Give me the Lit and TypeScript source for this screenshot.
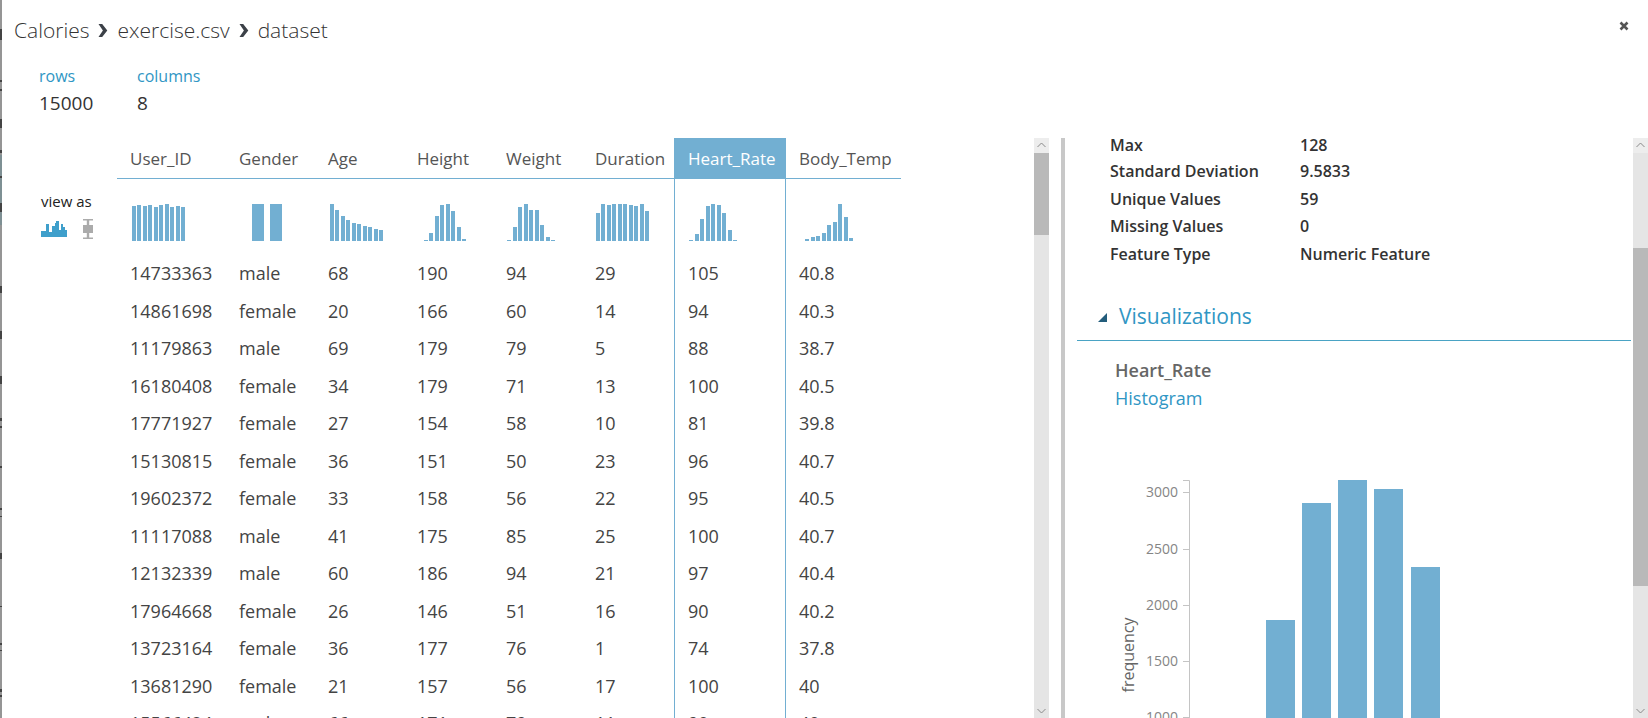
import { LitElement, html, svg, css } from "lit";
import { customElement, property, state } from "lit/decorators.js";
import { classMap } from "lit/directives/class-map.js";

interface Spark {
  start: number;
  phase: 0 | 1;
  bars: number[];
  barWidth?: number;
  step?: number;
}

interface Column {
  name: string;
  size: string;
  spark: Spark;
}

const COLUMNS: Column[] = [
  { name: "User_ID", size: "w-id", spark: { start: 2, phase: 0, bars: [35, 36, 35, 36, 34, 36, 37, 34, 35, 34] } },
  { name: "Gender", size: "w-std", spark: { start: 13, phase: 0, bars: [37, 37], barWidth: 12, step: 18 } },
  { name: "Age", size: "w-std", spark: { start: 2, phase: 0, bars: [37, 31, 25, 21, 18, 17, 15, 14, 12, 11] } },
  { name: "Height", size: "w-std", spark: { start: 7, phase: 0, bars: [1, 8, 25, 36, 37, 30, 14, 2] } },
  { name: "Weight", size: "w-std", spark: { start: 1, phase: 1, bars: [1, 14, 34, 37, 31, 31, 16, 4, 1] } },
  { name: "Duration", size: "w-duration", spark: { start: 1, phase: 0, bars: [28, 37, 36, 37, 37, 37, 36, 35, 37, 30] } },
  { name: "Heart_Rate", size: "w-heart", spark: { start: 1, phase: 1, bars: [1, 7, 22, 35, 37, 36, 28, 11, 1] } },
  { name: "Body_Temp", size: "w-temp", spark: { start: 6, phase: 1, bars: [2, 4, 5, 8, 16, 19, 37, 24, 3] } },
];

const ROWS: string[][] = [
  ["14733363", "male", "68", "190", "94", "29", "105", "40.8"],
  ["14861698", "female", "20", "166", "60", "14", "94", "40.3"],
  ["11179863", "male", "69", "179", "79", "5", "88", "38.7"],
  ["16180408", "female", "34", "179", "71", "13", "100", "40.5"],
  ["17771927", "female", "27", "154", "58", "10", "81", "39.8"],
  ["15130815", "female", "36", "151", "50", "23", "96", "40.7"],
  ["19602372", "female", "33", "158", "56", "22", "95", "40.5"],
  ["11117088", "male", "41", "175", "85", "25", "100", "40.7"],
  ["12132339", "male", "60", "186", "94", "21", "97", "40.4"],
  ["17964668", "female", "26", "146", "51", "16", "90", "40.2"],
  ["13723164", "female", "36", "177", "76", "1", "74", "37.8"],
  ["13681290", "female", "21", "157", "56", "17", "100", "40"],
  ["15566424", "male", "66", "171", "79", "11", "90", "40"],
];

const STATS: [string, string][] = [
  ["Max", "128"],
  ["Standard Deviation", "9.5833"],
  ["Unique Values", "59"],
  ["Missing Values", "0"],
  ["Feature Type", "Numeric Feature"],
];

@customElement("spark-bars")
export class SparkBars extends LitElement {
  @property({ attribute: false }) spark!: Spark;

  static styles = css`
    :host { display: block; }
    .plot { display: block; fill: #72afd2; }
  `;

  render() {
    const { start, phase, bars, barWidth = 4, step } = this.spark;
    return html`<svg class="plot" width="64" height="37" shape-rendering="crispEdges" aria-hidden="true">
      ${bars.map((h, i) => {
        const x = start + (step ? i * step : Math.floor((i * 11 + phase) / 2));
        return svg`<rect x=${x} y=${37 - h} width=${barWidth} height=${h}></rect>`;
      })}
    </svg>`;
  }
}

@customElement("scroll-rail")
export class ScrollRail extends LitElement {
  @property({ type: Number }) before = 0;
  @property({ type: Number }) thumb = 80;

  static styles = css`
    :host { display: flex; flex-direction: column; width: 15px; background: #e5e5e5; }
    .cap { display: block; flex: none; width: 15px; height: 15px; fill: none; stroke: #8a8a8a; }
    .up { background: #ededed; }
    .thumb { background: #b9b9b9; flex: none; }
    .space { flex: 1; }
  `;

  render() {
    return html`
      <svg class="cap up" viewBox="0 0 15 15"><path d="M3.5 9 L7.5 5 L11.5 9"></path></svg>
      <div style="height:${this.before}px"></div>
      <div class="thumb" style="height:${this.thumb}px"></div>
      <div class="space"></div>
      <svg class="cap" viewBox="0 0 15 15"><path d="M3.5 6 L7.5 10 L11.5 6"></path></svg>
    `;
  }
}

@customElement("histogram-chart")
export class HistogramChart extends LitElement {
  static styles = css`
    :host { display: block; }
    .chart { display: block; font-family: "Open Sans", "Noto Sans", sans-serif; font-weight: 400; }
    .bar { fill: #72afd2; }
    .axis { fill: none; stroke: #c4c4c4; stroke-width: 1; }
    .tick { fill: #858585; font-size: 14px; text-anchor: end; }
    .name { fill: #666; font-size: 16px; text-anchor: middle; }
  `;

  private readonly counts = [12, 560, 1867, 2905, 3110, 3030, 2337, 900, 60];
  private readonly base = 350;
  private readonly span = 350;
  private readonly max = 3110;

  private y(value: number) {
    return Math.round(this.base - (value / this.max) * this.span);
  }

  render() {
    const ticks = [3000, 2500, 2000, 1500, 1000, 500, 0];
    return html`<svg class="chart" width="460" height="400" role="img" aria-label="Histogram of Heart_Rate">
      <text class="name" transform="translate(34 180) rotate(-90)">frequency</text>
      <path class="axis" d="M83 5.5 H89.5 V355"></path>
      ${ticks.map((t) => {
        const y = this.y(t) + 5;
        return svg`<path class="axis" d="M83 ${y + 0.5} H90"></path>
          <text class="tick" x="78" y=${y + 5}>${t}</text>`;
      })}
      ${this.counts.map((c, i) => {
        const y = this.y(c) + 5;
        return svg`<rect class="bar" x=${Math.round(93 + i * 36.25)} y=${y} width="29" height=${355 - y}></rect>`;
      })}
    </svg>`;
  }
}

@customElement("app-root")
export class AppRoot extends LitElement {
  @state() private selected = "Heart_Rate";

  static styles = css`
    :host {
      display: flex;
      height: 100vh;
      overflow: hidden;
      background: #fff;
      color: #333;
      font-family: "Open Sans", "Noto Sans", sans-serif;
      font-size: 18px;
      font-weight: 400;
    }
    * { box-sizing: border-box; }
    button { border: 0; padding: 0; margin: 0; background: none; font: inherit; color: inherit; cursor: pointer; }
    .edge { flex: none; width: 2px; background: #959595; }
    .edge svg { display: block; }
    .main { flex: 1; min-width: 0; display: flex; flex-direction: column; }
    .top { flex: none; display: flex; justify-content: space-between; padding: 12px 19px 0 12px; }
    .crumbs { display: flex; align-items: center; height: 36px; gap: 9px; font-size: 21px; line-height: 36px; font-weight: 300; }
    .crumbs a { color: #333; text-decoration: none; }
    .chev { display: block; }
    .close { width: 10px; height: 10px; margin-top: 9px; }
    .close svg { display: block; }
    .counts { flex: none; display: flex; margin: 14px 0 0 37px; height: 76px; }
    .counts div { width: 98px; }
    .counts dt { color: #3096c4; font-size: 16px; line-height: 28px; }
    .counts dd { margin: 0; font-size: 19px; line-height: 26px; }
    .body { flex: 1; min-height: 0; display: flex; }
    .side { flex: none; width: 115px; padding: 53px 0 0 39px; font-size: 15px; line-height: 20px; color: #222; }
    .views { display: flex; gap: 15px; margin-top: 8px; }
    .views svg { display: block; }
    .grid { flex: 1; min-width: 0; overflow: hidden; }
    table { border-collapse: separate; border-spacing: 0; table-layout: fixed; width: 784px; }
    th, td { text-align: left; padding: 0 0 0 13px; white-space: nowrap; }
    th { height: 41px; border-bottom: 1px solid #72afd2; font-size: 17px; font-weight: 400; color: #555; }
    .on, .after { border-left: 1px solid #72afd2; }
    th.on { background: #72afd2; color: #fff; }
    .plots td { height: 76px; padding-top: 10px; }
    .row td { height: 37px; line-height: 37px; color: #444; }
    .row:nth-child(even) td { height: 38px; line-height: 38px; }
    .w-id { width: 109px; }
    .w-std { width: 89px; }
    .w-duration { width: 92px; }
    .w-heart { width: 111px; }
    .w-temp { width: 116px; }
    .split { flex: none; width: 4px; margin: 0 0 0 12px; background: #c8c8c8; }
    .panel { flex: none; width: 568px; min-width: 0; overflow: hidden; padding: 0 2px 0 12px; }
    .stats { margin: 0; padding: 0 0 0 33px; font-size: 16px; font-weight: 600; }
    .stats div { display: flex; height: 27px; line-height: 27px; }
    .stats div:first-child { height: 20px; line-height: 14px; }
    .stats div:nth-child(even) { height: 28px; }
    .stats dt { width: 190px; }
    .stats dd { margin: 0; }
    .section { display: flex; align-items: center; gap: 12px; width: 100%; height: 50px; margin-top: 23px; padding: 0 0 0 21px; border-bottom: 1px solid #4aa3c4; font-size: 21px; color: #3096c4; }
    h2, h3, p { margin: 0; font-weight: inherit; font-size: inherit; }
    .tri { display: block; margin-top: 4px; }
    .chartname { padding: 15px 0 0 38px; line-height: 28px; }
    .chartname h3 { font-weight: 600; color: #666; }
    .chartname p { color: #3096c4; }
    .figure { padding: 63px 0 0 23px; }
  `;

  private edge() {
    const marks = [
      [29, 11], [80, 2], [89, 2], [119, 9], [150, 3], [176, 2], [203, 9], [208, 2],
      [286, 7], [331, 8], [376, 8], [418, 3], [426, 2], [466, 2], [508, 2], [516, 1],
      [553, 6], [606, 1], [643, 2], [650, 1], [689, 3], [695, 2],
    ];
    return html`<svg width="2" height="718" aria-hidden="true">
      <rect y="155" width="2" height="70" fill="#7e9094"></rect>
      ${marks.map(([y, h]) => svg`<rect y=${y} width="2" height=${h} fill="#444"></rect>`)}
    </svg>`;
  }

  private chevron() {
    return html`<svg class="chev" width="10" height="13" viewBox="0 0 10 13" aria-hidden="true">
      <path d="M0.5 0 H4.2 L9.3 6.5 L4.2 13 H0.5 L4.9 6.5 Z" fill="#3c4148"></path>
    </svg>`;
  }

  private mark(i: number) {
    const at = COLUMNS.findIndex((c) => c.name === this.selected);
    return classMap({ on: i === at, after: i === at + 1 });
  }

  render() {
    return html`
      <div class="edge">${this.edge()}</div>
      <div class="main">
        <header class="top">
          <nav class="crumbs" aria-label="Breadcrumb">
            <a href="#calories">Calories</a>${this.chevron()}
            <a href="#exercise">exercise.csv</a>${this.chevron()}
            <a href="#dataset">dataset</a>
          </nav>
          <button class="close" aria-label="Close">
            <svg width="10" height="10" viewBox="0 0 10 10"><path d="M1.5 1.5 L8.5 8.5 M8.5 1.5 L1.5 8.5" stroke="#555" stroke-width="2.6" fill="none"></path></svg>
          </button>
        </header>
        <dl class="counts">
          <div><dt>rows</dt><dd>15000</dd></div>
          <div><dt>columns</dt><dd>8</dd></div>
        </dl>
        <div class="body">
          <aside class="side">
            <span>view as</span>
            <div class="views">
              <button aria-label="Histogram">
                <svg width="26" height="16" viewBox="0 0 26 16"><path d="M0 16 V10 H5 V3 H8 V11 H11 V5 H14 V2 H15 V0 H18 V9 H20 V3 H22 V6 H24 V9 H26 V16 Z" fill="#3f9fcb"></path></svg>
              </button>
              <button aria-label="Box plot">
                <svg width="12" height="20" viewBox="0 0 12 20" fill="#ababab"><path d="M1 0 H11 V1.5 H7.2 V6 H11 V14 H7.2 V18.5 H11 V20 H1 V18.5 H4.8 V14 H1 V6 H4.8 V1.5 H1 Z"></path></svg>
              </button>
            </div>
          </aside>
          <div class="grid">
            <table>
              <colgroup>${COLUMNS.map((c) => html`<col class=${c.size}>`)}</colgroup>
              <thead>
                <tr>${COLUMNS.map((c, i) => html`<th scope="col" class=${this.mark(i)}><button @click=${() => (this.selected = c.name)}>${c.name}</button></th>`)}</tr>
              </thead>
              <tbody class="plots">
                <tr>${COLUMNS.map((c, i) => html`<td class=${this.mark(i)}><spark-bars .spark=${c.spark}></spark-bars></td>`)}</tr>
              </tbody>
              <tbody>
                ${ROWS.map((r) => html`<tr class="row">${r.map((v, i) => html`<td class=${this.mark(i)}>${v}</td>`)}</tr>`)}
              </tbody>
            </table>
          </div>
          <scroll-rail .before=${0} .thumb=${82}></scroll-rail>
          <div class="split"></div>
          <section class="panel">
            <dl class="stats">${STATS.map(([k, v]) => html`<div><dt>${k}</dt><dd>${v}</dd></div>`)}</dl>
            <h2>
              <button class="section" aria-expanded="true">
                <svg class="tri" width="9" height="9" viewBox="0 0 9 9" aria-hidden="true"><path d="M9 0 V9 H0 Z" fill="#235d7c"></path></svg>
                Visualizations
              </button>
            </h2>
            <div class="chartname"><h3>${this.selected}</h3><p>Histogram</p></div>
            <div class="figure"><histogram-chart></histogram-chart></div>
          </section>
          <scroll-rail .before=${95} .thumb=${338}></scroll-rail>
        </div>
      </div>
    `;
  }
}
